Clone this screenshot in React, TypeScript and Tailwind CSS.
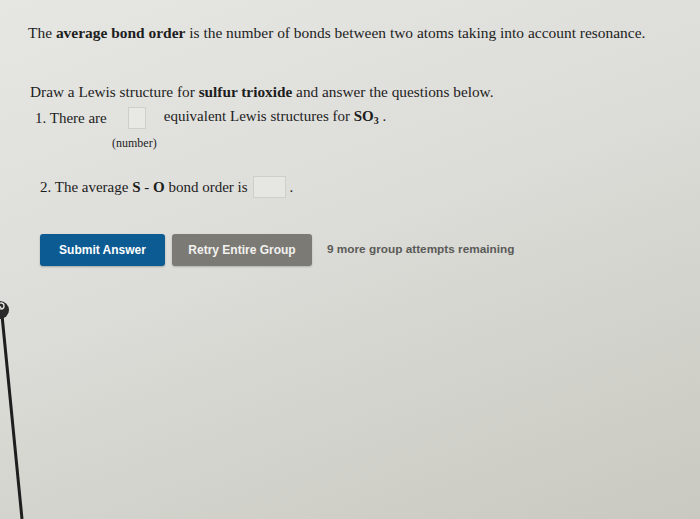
import React from "react";

export default function App() {
  return (
    <div
      className="relative w-[700px] h-[519px] overflow-hidden bg-[linear-gradient(160deg,#e6e6e3_0%,#dcdcd8_45%,#c9c9c1_100%)] text-[#1d1d1d]"
      style={{ fontFamily: '"Liberation Serif", "Times New Roman", serif' }}
    >
      <div className="flex flex-col">
        <p className="ml-[28px] mt-[24px] text-[15.45px] leading-[18px]">
          The <b>average bond order</b> is the number of bonds between two atoms taking into account resonance.
        </p>

        <p className="ml-[30px] mt-[41px] text-[15.3px] leading-[18px]">
          Draw a Lewis structure for <b>sulfur trioxide</b> and answer the questions below.
        </p>

        <div className="ml-[35px] mt-[6px] flex items-start text-[15px] leading-[18px]">
          <span className="mt-[2px]">1. There are</span>
          <div className="ml-[21px] flex flex-col items-center">
            <div className="w-[18px] h-[22px] border border-[#cfcfc9] bg-[#e8e8e4]" />
          </div>
          <span className="ml-[18px]">
            equivalent Lewis structures for <b>SO<sub className="text-[10px]">3</sub></b> .
          </span>
        </div>

        <p className="ml-[112px] mt-[7px] text-[12px] leading-[14px]">(number)</p>

        <div className="ml-[40px] mt-[26px] flex items-center text-[15px] leading-[18px]">
          <span>
            2. The average <b>S</b> - <b>O</b> bond order is
          </span>
          <div className="ml-[5px] w-[33px] h-[22px] border border-[#cfcfc9] bg-[#e6e6e2]" />
          <span className="ml-[4px]">.</span>
        </div>

        <div
          className="ml-[40px] mt-[36px] flex items-center"
          style={{ fontFamily: '"Liberation Sans", Arial, sans-serif' }}
        >
          <div className="w-[125px] h-[32px] rounded-[3px] bg-[#0c5b93] text-white text-[12px] font-bold flex items-center justify-center shadow-[0_1px_2px_rgba(0,0,0,0.25)]">
            Submit Answer
          </div>
          <div className="ml-[7px] w-[140px] h-[32px] rounded-[3px] bg-[#7c7a75] text-[#f2f2f0] text-[12px] font-bold flex items-center justify-center shadow-[0_1px_2px_rgba(0,0,0,0.2)]">
            Retry Entire Group
          </div>
          <span className="ml-[15px] text-[11.8px] font-bold text-[#5a5a58]">9 more group attempts remaining</span>
        </div>
      </div>

      <svg className="absolute left-0 top-0" width="700" height="519">
        <line x1="1" y1="305" x2="22" y2="519" stroke="#1e1e1e" strokeWidth="3" />
        <circle cx="0" cy="310" r="9" fill="#2a2a2a" />
        <path d="M-2 306 a3 3 0 1 1 3 3 a3 3 0 1 0 -3 3" stroke="#e0e0dc" strokeWidth="1.4" fill="none" />
      </svg>
    </div>
  );
}
